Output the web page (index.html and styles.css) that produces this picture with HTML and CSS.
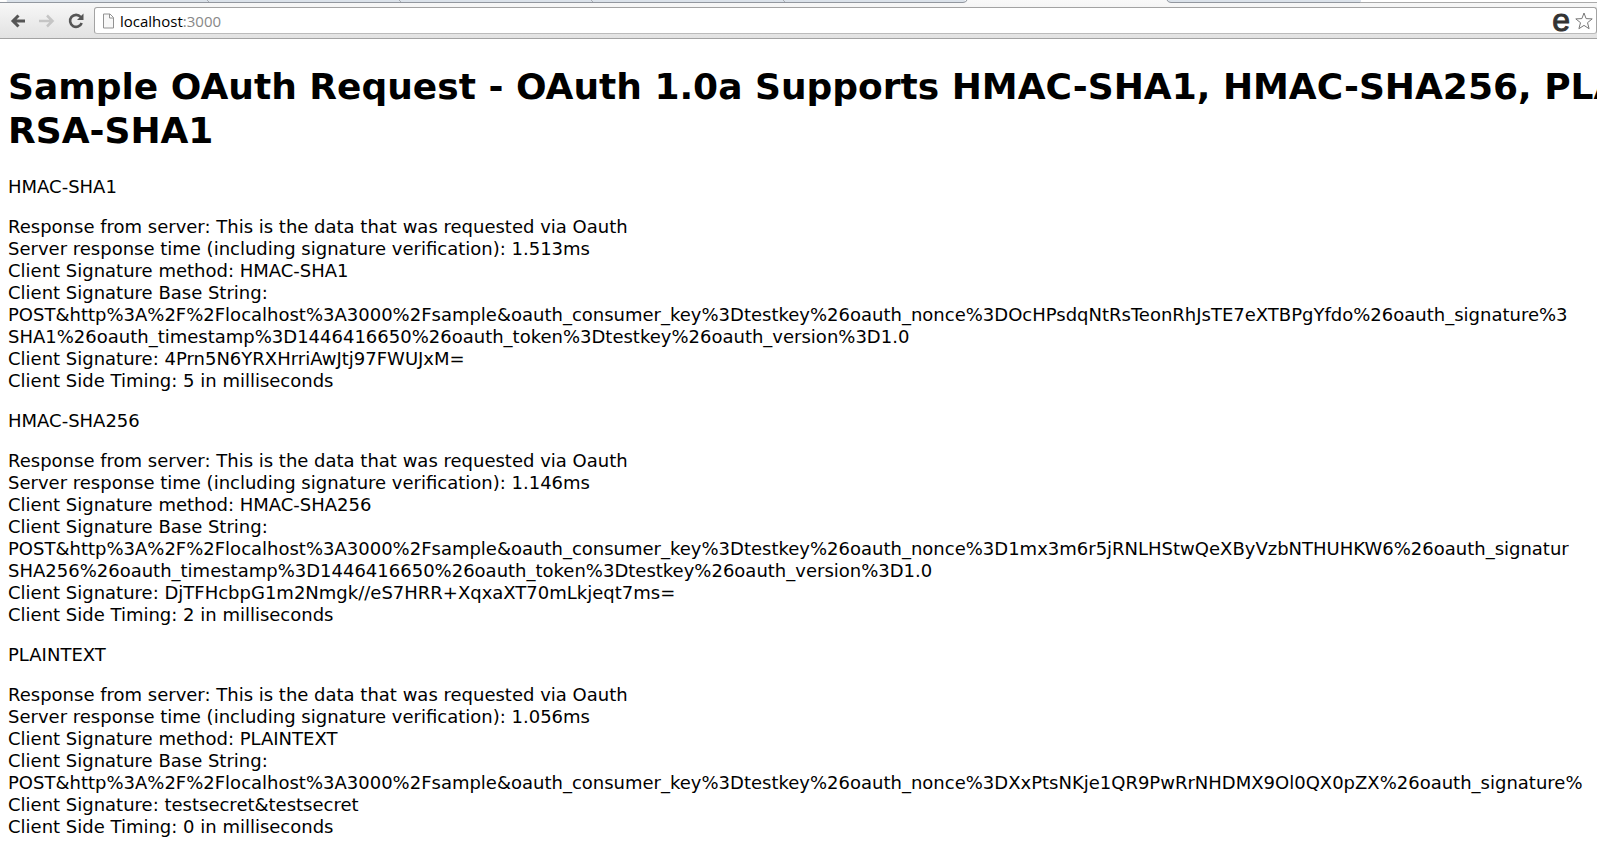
FILE: index.html
```html
<!DOCTYPE html>
<html lang="en">
<head>
<meta charset="utf-8">
<title>Sample OAuth Request</title>
<link rel="stylesheet" href="styles.css">
</head>
<body>
<header class="browser">
  <div class="tabs" aria-hidden="true">
    <svg class="tabs-edge" width="1597" height="4" viewBox="0 0 1597 4">
      <path d="M7 0H964L967 2H7zM1168 0H1361L1364 2H1168z" fill="#dbe2ea"/>
      <path d="M0 2.5H963Q966 2.5 967 0M1167 0Q1168 2.500 1171 2.500H1360" fill="none" stroke="#92979f"/>
      <path d="M1360 2.500H1597" fill="none" stroke="#aaa"/>
      <path d="M0 0H6V1.500H0zM1361 0H1597V2H1361z" fill="#fff"/>
      <path d="M207 0L209 2M399 0L401 2M591 0L593 2M783 0L785 2" fill="none" stroke="#a9adb3"/>
    </svg>
  </div>
  <div class="toolbar">
    <button class="tool" aria-label="Back"><svg width="16" height="16" viewBox="0 0 16 16"><path d="M15 8H3M8.500 2.500L3 8L8.500 13.500" fill="none" stroke="#555" stroke-width="3"/></svg></button>
    <button class="tool" aria-label="Forward"><svg width="16" height="16" viewBox="0 0 16 16"><path d="M0 8H12.500M8 2.500L13.500 8L8 13.500" fill="none" stroke="#c5c5c5" stroke-width="2.500"/></svg></button>
    <button class="tool" aria-label="Reload"><svg width="16" height="16" viewBox="0 0 16 16"><path d="M12.700 4A6 6 0 1 0 13.700 10" fill="none" stroke="#555" stroke-width="2.600"/><path d="M15.500 0.500V7H9z" fill="#555"/></svg></button>
    <div class="omnibox">
      <svg width="13" height="16" viewBox="0 0 13 16"><path d="M1.500 1H8L11.500 4.500V15H1.500zM7.500 1V5H11.500" fill="#f8f8f8" stroke="#929292"/></svg>
      <span class="address">localhost<span class="port">:3000</span></span>
      <span class="extension">e</span>
      <svg width="18" height="18" viewBox="0 0 18 18"><path d="M9 1L11.100 6.600L17.200 6.900L12.500 10.700L14.100 16.700L9 13.400L3.900 16.700L5.500 10.700L0.800 6.900L6.900 6.600z" fill="#fff" stroke="#777" stroke-linejoin="round"/></svg>
    </div>
  </div>
</header>
<main class="page">
  <h1>Sample OAuth Request - OAuth 1.0a Supports HMAC-SHA1, HMAC-SHA256, PLA<br>RSA-SHA1</h1>
  <p>HMAC-SHA1</p>
  <p>Response from server: This is the data that was requested via Oauth<br>
  Server response time (including signature verification): 1.513ms<br>
  Client Signature method: HMAC-SHA1<br>
  Client Signature Base String:<br>
  POST&amp;http%3A%2F%2Flocalhost%3A3000%2Fsample&amp;oauth_consumer_key%3Dtestkey%26oauth_nonce%3DOcHPsdqNtRsTeonRhJsTE7eXTBPgYfdo%26oauth_signature%3<br>
  SHA1%26oauth_timestamp%3D1446416650%26oauth_token%3Dtestkey%26oauth_version%3D1.0<br>
  Client Signature: 4Prn5N6YRXHrriAwJtj97FWUJxM=<br>
  Client Side Timing: 5 in milliseconds</p>
  <p>HMAC-SHA256</p>
  <p>Response from server: This is the data that was requested via Oauth<br>
  Server response time (including signature verification): 1.146ms<br>
  Client Signature method: HMAC-SHA256<br>
  Client Signature Base String:<br>
  POST&amp;http%3A%2F%2Flocalhost%3A3000%2Fsample&amp;oauth_consumer_key%3Dtestkey%26oauth_nonce%3D1mx3m6r5jRNLHStwQeXByVzbNTHUHKW6%26oauth_signatur<br>
  SHA256%26oauth_timestamp%3D1446416650%26oauth_token%3Dtestkey%26oauth_version%3D1.0<br>
  Client Signature: DjTFHcbpG1m2Nmgk//eS7HRR+XqxaXT70mLkjeqt7ms=<br>
  Client Side Timing: 2 in milliseconds</p>
  <p>PLAINTEXT</p>
  <p>Response from server: This is the data that was requested via Oauth<br>
  Server response time (including signature verification): 1.056ms<br>
  Client Signature method: PLAINTEXT<br>
  Client Signature Base String:<br>
  POST&amp;http%3A%2F%2Flocalhost%3A3000%2Fsample&amp;oauth_consumer_key%3Dtestkey%26oauth_nonce%3DXxPtsNKje1QR9PwRrNHDMX9Ol0QX0pZX%26oauth_signature%<br>
  Client Signature: testsecret&amp;testsecret<br>
  Client Side Timing: 0 in milliseconds</p>
</main>
</body>
</html>
```

FILE: styles.css
```css
body {
  margin: 0;
  background: #fff;
  color: #000;
  font: 18px/22px Verdana, "DejaVu Sans", sans-serif;
}

.browser {
  background: linear-gradient(#f9f9f9, #e2e2e2);
  border-bottom: 1px solid #a3a3a3;
}

.tabs {
  height: 4px;
  overflow: hidden;
}

.tabs-edge {
  display: block;
}

.toolbar {
  display: flex;
  align-items: center;
  padding: 3px 0 4px 10px;
}

.tool {
  display: flex;
  margin: 0 13px 0 0;
  padding: 0;
  border: 0;
  background: none;
}

.tool:nth-child(3) {
  margin-right: 10px;
}

.omnibox {
  flex: 1;
  display: flex;
  align-items: center;
  height: 25px;
  padding: 0 3px 0 7px;
  background: #fff;
  border: 1px solid #a3a3a3;
  border-bottom-color: #bbb;
  border-radius: 3px;
  gap: 5px;
}

.address {
  flex: 1;
  font: 15px/24px "Open Sans", sans-serif;
}

.port {
  color: #888;
}

.extension {
  color: #333;
  font: 32px/26px "Liberation Sans", sans-serif;
  height: 28px;
  -webkit-text-stroke: 1px #333;
}

.page {
  padding: 26px 8px 0;
  overflow: hidden;
  white-space: nowrap;
}

h1 {
  margin: 0 0 23px;
  font-size: 36px;
  line-height: 44px;
}

p {
  margin: 0 0 18px;
}
```
